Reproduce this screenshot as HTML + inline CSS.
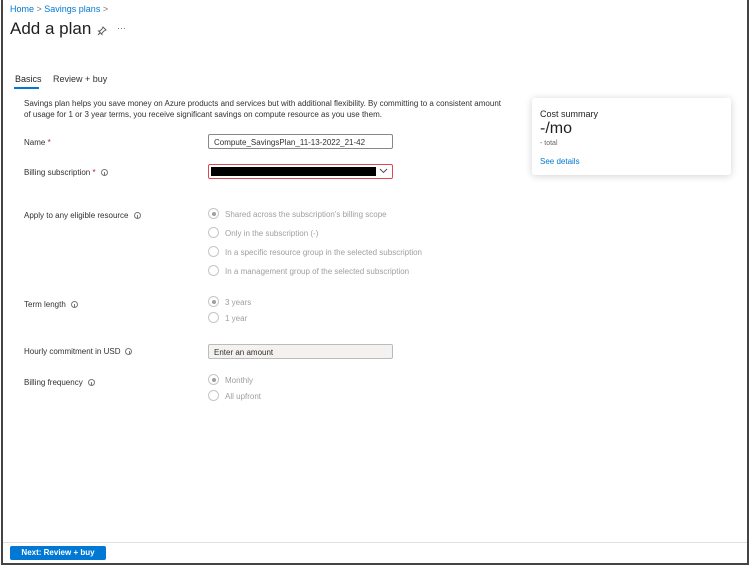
<!DOCTYPE html>
<html><head><meta charset="utf-8"><style>
*{box-sizing:border-box;margin:0;padding:0}
body{width:750px;height:567px;background:#fff;font-family:"Liberation Sans",sans-serif;color:#323130;position:relative;overflow:hidden;font-size:8px}
.a{position:absolute;white-space:nowrap}
.frame{position:absolute;left:1px;top:-2px;width:748px;height:567px;border:2px solid #444;border-top:none}
.lbl{font-size:8px;color:#323130}
.req{color:#a4262c}
.info{display:inline-block;width:7px;height:7px;border:0.8px solid #777;border-radius:50%;margin-left:5px;vertical-align:-1px;position:relative}
.info:after{content:"";position:absolute;left:2.2px;top:2px;width:1px;height:3px;background:#777}
.r{position:absolute;width:11px;height:11px;border:1px solid #c8c6c4;border-radius:50%}
.r.on:after{content:"";position:absolute;left:2.5px;top:2.5px;width:4px;height:4px;border-radius:50%;background:#a19f9d}
.rt{color:#a19f9d;font-size:8px}
.in{position:absolute;height:15px;border:1px solid #8a8886;border-radius:2px;font-size:8px;padding:3px 5px;color:#323130}
</style></head><body>
<div class="frame"></div>
<div class="a" style="left:10px;top:4px;font-size:9px;color:#0078d4">Home <span style="color:#777">&gt;</span> Savings plans <span style="color:#777">&gt;</span></div>
<div class="a" style="left:10px;top:19px;font-size:17px;color:#201f1e">Add a plan</div>
<svg class="a" style="left:97px;top:26px" width="10" height="10" viewBox="0 0 10 10"><path d="M6 1l3 3-2 1-2 2 0 1.5L1.5 5 3 5l2-2z M3.5 6.5L1 9" stroke="#555" stroke-width="0.9" fill="none"/></svg>
<div class="a" style="left:117px;top:23px;font-size:9px;color:#666">···</div>
<div class="a" style="left:15px;top:74px;font-size:9px;color:#201f1e">Basics</div>
<div class="a" style="left:14px;top:87px;width:25px;height:2px;background:#0078d4"></div>
<div class="a" style="left:53px;top:74px;font-size:9px;color:#323130">Review + buy</div>
<div class="a" style="left:24px;top:98px;font-size:8px;line-height:11px;color:#323130">Savings plan helps you save money on Azure products and services but with additional flexibility. By committing to a consistent amount<br>of usage for 1 or 3 year terms, you receive significant savings on compute resource as you use them.</div>
<div class="a lbl" style="left:24px;top:138px">Name <span class="req">*</span></div>
<div class="in" style="left:208px;top:134px;width:185px">Compute_SavingsPlan_11-13-2022_21-42</div>
<div class="a lbl" style="left:24px;top:168px">Billing subscription <span class="req">*</span><span class="info"></span></div>
<div class="in" style="left:208px;top:164px;width:185px;border-color:#e0484f"></div>
<div class="a" style="left:211px;top:167px;width:165px;height:9px;background:#000"></div>
<svg class="a" style="left:379px;top:168px" width="9" height="6"><path d="M1 1l3.5 3.5L8 1" stroke="#444" fill="none" stroke-width="0.9"/></svg>
<div class="a lbl" style="left:24px;top:211px">Apply to any eligible resource<span class="info"></span></div>
<div class="r on" style="left:208px;top:208px"></div><div class="a rt" style="left:225px;top:210px">Shared across the subscription's billing scope</div>
<div class="r" style="left:208px;top:227px"></div><div class="a rt" style="left:225px;top:229px">Only in the subscription (-)</div>
<div class="r" style="left:208px;top:246px"></div><div class="a rt" style="left:225px;top:248px">In a specific resource group in the selected subscription</div>
<div class="r" style="left:208px;top:265px"></div><div class="a rt" style="left:225px;top:267px">In a management group of the selected subscription</div>
<div class="a lbl" style="left:24px;top:300px">Term length<span class="info"></span></div>
<div class="r on" style="left:208px;top:296px"></div><div class="a rt" style="left:225px;top:298px">3 years</div>
<div class="r" style="left:208px;top:312px"></div><div class="a rt" style="left:225px;top:314px">1 year</div>
<div class="a lbl" style="left:24px;top:347px">Hourly commitment in USD<span class="info"></span></div>
<div class="in" style="left:208px;top:344px;width:185px;background:#f3f2f1;border-color:#bbb">Enter an amount</div>
<div class="a lbl" style="left:24px;top:378px">Billing frequency<span class="info"></span></div>
<div class="r on" style="left:208px;top:374px"></div><div class="a rt" style="left:225px;top:376px">Monthly</div>
<div class="r" style="left:208px;top:390px"></div><div class="a rt" style="left:225px;top:392px">All upfront</div>
<div class="a" style="left:532px;top:98px;width:199px;height:77px;background:#fff;border-radius:3px;box-shadow:0 1px 8px rgba(0,0,0,0.18)"></div>
<div class="a" style="left:540px;top:109px;font-size:9px;color:#201f1e">Cost summary</div>
<div class="a" style="left:540px;top:120px;font-size:16px;color:#201f1e">-/mo</div>
<div class="a" style="left:540px;top:140px;font-size:7px;color:#666">- total</div>
<div class="a" style="left:540px;top:157px;font-size:8px;color:#0078d4">See details</div>
<div class="a" style="left:3px;top:542px;width:744px;height:1px;background:#e1dfdd"></div>
<div class="a" style="left:10px;top:546px;width:96px;height:14px;background:#0078d4;border-radius:2px;color:#fff;font-size:8px;font-weight:bold;text-align:center;line-height:14px">Next: Review + buy</div>
</body></html>
